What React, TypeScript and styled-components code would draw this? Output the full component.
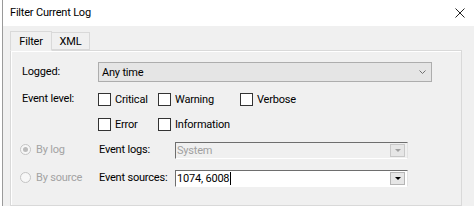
import React from "react";
import styled, { createGlobalStyle } from "styled-components";

const GlobalStyle = createGlobalStyle`
    html, body {
        margin: 0;
        padding: 0;
        background: #ffffff;
    }
    body {
        font-family: Roboto, "Noto Sans", sans-serif;
        font-size: 11px;
        letter-spacing: -0.2px;
        color: #000000;
    }
`;

const Frame = styled.div`
    width: 474px;
    height: 206px;
    padding-left: 2px;
    box-sizing: border-box;
    background: #ffffff;
    overflow: hidden;
`;

const Window = styled.div`
    height: 100%;
    border-left: 1px solid #9a9a9a;
    display: flex;
    flex-direction: column;
    background: #f0f0f0;
`;

const TitleBar = styled.div`
    height: 26px;
    flex: 0 0 26px;
    background: #ffffff;
    display: flex;
    align-items: center;
    padding: 0 9px 0 7px;
    box-sizing: border-box;
`;

const Title = styled.div`
    flex: 1 1 auto;
    font-size: 11px;
    padding-bottom: 1px;
`;

const CloseGlyph = styled.svg`
    width: 10px;
    height: 10px;
    margin-bottom: 1px;
`;

const Body = styled.div`
    flex: 1 1 auto;
    padding: 5px 12px 0 7px;
    display: flex;
    flex-direction: column;
`;

const TabStrip = styled.div`
    display: flex;
    align-items: flex-end;
    height: 19px;
    position: relative;
    z-index: 1;
`;

const Tab = styled.div<{ $active?: boolean; $w: number }>`
    flex: 0 0 ${(p) => p.$w}px;
    width: ${(p) => p.$w}px;
    height: ${(p) => (p.$active ? "20px" : "18px")};
    display: flex;
    align-items: center;
    justify-content: center;
    box-sizing: border-box;
    border: 1px solid #d9d9d9;
    border-bottom: ${(p) => (p.$active ? "1px solid #f0f0f0" : "1px solid #d9d9d9")};
    border-left: ${(p) => (p.$active ? "1px solid #d9d9d9" : "none")};
    background: #f0f0f0;
    margin-bottom: ${(p) => (p.$active ? "-1px" : "0")};
    padding-top: ${(p) => (p.$active ? "0" : "1px")};
`;

const Panel = styled.div`
    flex: 1 1 auto;
    border: 1px solid #d9d9d9;
    box-shadow: inset 1px 1px 0 #ffffff;
    padding: 11px 0 0 9px;
    display: flex;
    flex-direction: column;
`;

const FieldRow = styled.div<{ $gap?: number }>`
    display: grid;
    grid-template-columns: 76px auto;
    padding-left: 2px;
    margin-top: ${(p) => p.$gap ?? 0}px;
    align-items: start;
`;

const FieldLabel = styled.div<{ $h: number }>`
    height: ${(p) => p.$h}px;
    line-height: ${(p) => p.$h}px;
`;

const Dropdown = styled.div`
    width: 334px;
    height: 20px;
    box-sizing: border-box;
    background: #e5e5e5;
    border: 1px solid #adadad;
    display: flex;
    align-items: center;
    padding: 0 5px 0 3px;
`;

const DropdownText = styled.div`
    flex: 1 1 auto;
`;

const Chevron = styled.svg`
    width: 7px;
    height: 4px;
`;

const LevelGrid = styled.div`
    display: grid;
    grid-template-columns: 60px 82px auto;
    grid-auto-rows: 13px;
    row-gap: 12px;
`;

const CheckItem = styled.label`
    display: flex;
    align-items: center;
    gap: 4px;
    height: 13px;
    white-space: nowrap;
`;

const Box = styled.span`
    width: 13px;
    height: 13px;
    flex: 0 0 13px;
    box-sizing: border-box;
    border: 1px solid #333333;
    background: #ffffff;
`;

const SourceRow = styled.div<{ $gap?: number }>`
    display: grid;
    grid-template-columns: 79px 76px 233px;
    align-items: center;
    height: 17px;
    margin-top: ${(p) => p.$gap ?? 0}px;
`;

const Radio = styled.div`
    display: flex;
    align-items: center;
    gap: 5px;
    color: #a3a3a3;
    margin-top: -3px;
`;

const RadioCircle = styled.span<{ $checked?: boolean }>`
    width: 11px;
    height: 11px;
    flex: 0 0 11px;
    box-sizing: border-box;
    border-radius: 50%;
    border: 1px solid #c4c4c4;
    background: #f7f7f7;
    display: flex;
    align-items: center;
    justify-content: center;
    &::after {
        content: "";
        display: ${(p) => (p.$checked ? "block" : "none")};
        width: 5px;
        height: 5px;
        border-radius: 50%;
        background: #bcbcbc;
    }
`;

const SourceLabel = styled.div`
    margin-top: -3px;
    white-space: nowrap;
`;

const Combo = styled.div<{ $disabled?: boolean }>`
    height: 17px;
    box-sizing: border-box;
    border-top: 1px solid #6e6e6e;
    border-left: 1px solid #6e6e6e;
    border-right: 1px solid #e3e3e3;
    border-bottom: 1px solid #ffffff;
    background: ${(p) => (p.$disabled ? "#f0f0f0" : "#ffffff")};
    color: ${(p) => (p.$disabled ? "#a0a0a0" : "#000000")};
    display: flex;
    align-items: center;
    padding: 0 1px;
`;

const ComboText = styled.div`
    flex: 1 1 auto;
    display: flex;
    align-items: center;
    white-space: nowrap;
`;

const Caret = styled.span`
    display: inline-block;
    width: 1px;
    height: 13px;
    background: #000000;
    margin-left: 1px;
`;

const ComboButton = styled.div<{ $disabled?: boolean }>`
    width: 15px;
    height: 13px;
    box-sizing: border-box;
    background: #e6e6e6;
    border: 1px solid ${(p) => (p.$disabled ? "#c8c8c8" : "#b5b5b5")};
    display: flex;
    align-items: center;
    justify-content: center;
    margin-right: 1px;
`;

const Triangle = styled.span<{ $disabled?: boolean }>`
    width: 0;
    height: 0;
    border-left: 3.5px solid transparent;
    border-right: 3.5px solid transparent;
    border-top: 3.5px solid ${(p) => (p.$disabled ? "#a0a0a0" : "#000000")};
`;

export default function App() {
    return (
        <>
            <GlobalStyle />
            <Frame>
                <Window>
                    <TitleBar>
                        <Title>Filter Current Log</Title>
                        <CloseGlyph viewBox="0 0 10 10">
                            <path d="M0.5 0.5 L9.5 9.5 M9.5 0.5 L0.5 9.5" stroke="#222" strokeWidth="1" fill="none" />
                        </CloseGlyph>
                    </TitleBar>
                    <Body>
                        <TabStrip>
                            <Tab $active $w={42}>
                                Filter
                            </Tab>
                            <Tab $w={38}>XML</Tab>
                        </TabStrip>
                        <Panel>
                            <FieldRow>
                                <FieldLabel $h={20}>Logged:</FieldLabel>
                                <Dropdown>
                                    <DropdownText>Any time</DropdownText>
                                    <Chevron viewBox="0 0 7 4">
                                        <path d="M0.5 0.5 L3.5 3.5 L6.5 0.5" stroke="#707070" strokeWidth="1" fill="none" />
                                    </Chevron>
                                </Dropdown>
                            </FieldRow>
                            <FieldRow $gap={11}>
                                <FieldLabel $h={11}>Event level:</FieldLabel>
                                <LevelGrid>
                                    <CheckItem>
                                        <Box />
                                        Critical
                                    </CheckItem>
                                    <CheckItem>
                                        <Box />
                                        Warning
                                    </CheckItem>
                                    <CheckItem>
                                        <Box />
                                        Verbose
                                    </CheckItem>
                                    <CheckItem>
                                        <Box />
                                        Error
                                    </CheckItem>
                                    <CheckItem>
                                        <Box />
                                        Information
                                    </CheckItem>
                                </LevelGrid>
                            </FieldRow>
                            <SourceRow $gap={11}>
                                <Radio>
                                    <RadioCircle $checked />
                                    By log
                                </Radio>
                                <SourceLabel>Event logs:</SourceLabel>
                                <Combo $disabled>
                                    <ComboText>System</ComboText>
                                    <ComboButton $disabled>
                                        <Triangle $disabled />
                                    </ComboButton>
                                </Combo>
                            </SourceRow>
                            <SourceRow $gap={11}>
                                <Radio>
                                    <RadioCircle />
                                    By source
                                </Radio>
                                <SourceLabel>Event sources:</SourceLabel>
                                <Combo>
                                    <ComboText>
                                        1074, 6008
                                        <Caret />
                                    </ComboText>
                                    <ComboButton>
                                        <Triangle />
                                    </ComboButton>
                                </Combo>
                            </SourceRow>
                        </Panel>
                    </Body>
                </Window>
            </Frame>
        </>
    );
}
